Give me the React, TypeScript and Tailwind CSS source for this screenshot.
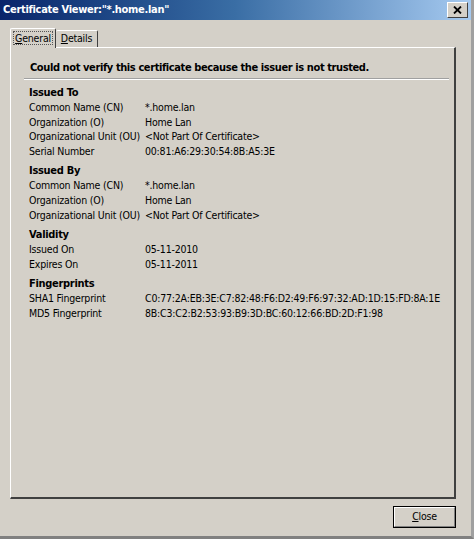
import React from "react";

const font = { fontFamily: "Tahoma, 'DejaVu Sans Condensed', 'Liberation Sans', sans-serif" };

type Row = [string, string];

function Section({ title, rows }: { title: string; rows: Row[] }) {
  return (
    <div className="mb-[5px]">
      <div className="font-bold text-[11px] tracking-[-0.3px] leading-[15px] h-[15px]">{title}</div>
      {rows.map(([k, v]) => (
        <div key={k} className="flex h-[14.6px] leading-[14.6px] whitespace-nowrap">
          <div className="w-[116px] shrink-0">{k}</div>
          <div>{v}</div>
        </div>
      ))}
    </div>
  );
}

export default function App() {
  return (
    <div
      className="w-[474px] h-[539px] bg-[#d4d0c8] text-[10.5px] tracking-[-0.2px] text-black flex flex-col border-r-[3px] border-b-[3px] border-r-[#a0a0a0] border-b-[#808080]"
      style={font}
    >
      {/* title bar */}
      <div className="h-[20px] flex items-center justify-between pl-[3px] pr-[3px] bg-gradient-to-r from-[#0a246a] via-[#3a6ea5] to-[#a6caf0]">
        <span className="text-white font-bold text-[11px] tracking-[-0.3px]">Certificate Viewer:"*.home.lan"</span>
        <button className="w-[21px] h-[16px] bg-[#d4d0c8] border border-t-white border-l-white border-r-[#404040] border-b-[#404040] flex items-center justify-center">
          <svg width="9" height="8" viewBox="0 0 9 8">
            <path d="M1 0.5 L8 7.5 M8 0.5 L1 7.5" stroke="#000" strokeWidth="1.8" />
          </svg>
        </button>
      </div>

      <div className="flex-1 flex flex-col pl-[10px] pr-[15px] pt-[7px]">
        {/* tabs */}
        <div className="flex items-end h-[20px] relative z-10">
          <div className="h-[20px] w-[46px] bg-[#d4d0c8] border-l border-t border-white border-r border-r-[#404040] rounded-t-[2px] flex items-center justify-center -mb-[1px] pb-[1px]">
            <span className="border border-dotted border-[#555] px-[1px] leading-[12px]">
              <u>G</u>eneral
            </span>
          </div>
          <div className="h-[17px] w-[42px] border-t border-white border-r border-r-[#404040] rounded-t-[2px] flex items-center justify-center">
            <span>
              <u>D</u>etails
            </span>
          </div>
        </div>

        {/* panel */}
        <div className="h-[452px] border-l border-t border-white border-r-2 border-b-2 border-r-[#404040] border-b-[#404040] pl-[18px] pr-[4px] pt-[12px]">
          <div className="font-bold text-[11px] tracking-[-0.4px] leading-[15px] pl-[1px] whitespace-nowrap">
            Could not verify this certificate because the issuer is not trusted.
          </div>
          <div className="mt-[3px] mb-[5px] mr-[1px] -ml-[5px] h-[2px] border-t border-[#a0a0a0] border-b border-b-white" />
          <Section
            title="Issued To"
            rows={[
              ["Common Name (CN)", "*.home.lan"],
              ["Organization (O)", "Home Lan"],
              ["Organizational Unit (OU)", "<Not Part Of Certificate>"],
              ["Serial Number", "00:81:A6:29:30:54:8B:A5:3E"],
            ]}
          />
          <Section
            title="Issued By"
            rows={[
              ["Common Name (CN)", "*.home.lan"],
              ["Organization (O)", "Home Lan"],
              ["Organizational Unit (OU)", "<Not Part Of Certificate>"],
            ]}
          />
          <Section
            title="Validity"
            rows={[
              ["Issued On", "05-11-2010"],
              ["Expires On", "05-11-2011"],
            ]}
          />
          <Section
            title="Fingerprints"
            rows={[
              ["SHA1 Fingerprint", "C0:77:2A:EB:3E:C7:82:48:F6:D2:49:F6:97:32:AD:1D:15:FD:8A:1E"],
              ["MD5 Fingerprint", "8B:C3:C2:B2:53:93:B9:3D:BC:60:12:66:BD:2D:F1:98"],
            ]}
          />
        </div>

        <div className="flex justify-end mt-[7px] pr-[0px]">
          <button className="w-[63px] h-[22px] border border-black bg-[#d4d0c8] flex">
            <span className="flex-1 flex items-center justify-center border border-t-white border-l-white border-r-[#808080] border-b-[#808080]">
              <u>C</u>lose
            </span>
          </button>
        </div>
      </div>
    </div>
  );
}
